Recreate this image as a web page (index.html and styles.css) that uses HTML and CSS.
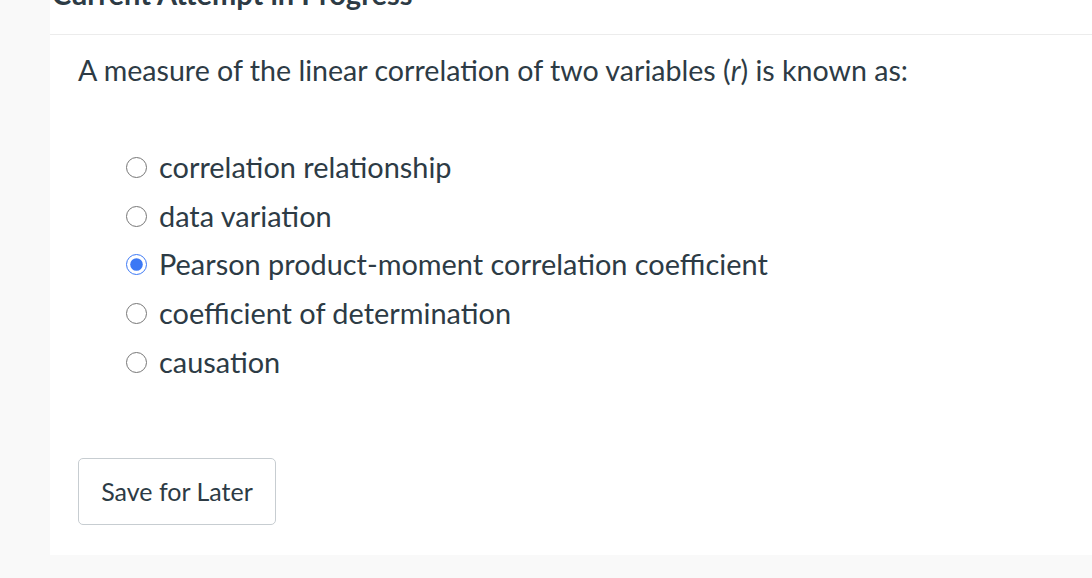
FILE: index.html
```html
<!DOCTYPE html>
<html lang="en">
  <head>
    <meta charset="UTF-8" />
    <title>Quiz</title>
    <link rel="stylesheet" href="styles.css">
  </head>
  <body>
    <div class="page">
      <div class="card">
        <h2 class="card-title">Current Attempt in Progress</h2>
        <div class="question">
          <p class="question-text">A measure of the linear correlation of two variables (<em>r</em>) is known as:</p>
          <ul class="answers">
            <li class="answer">
              <label><input type="radio" name="q1"> correlation relationship</label>
            </li>
            <li class="answer">
              <label><input type="radio" name="q1"> data variation</label>
            </li>
            <li class="answer">
              <label><input type="radio" name="q1" checked> Pearson product-moment correlation coefficient</label>
            </li>
            <li class="answer">
              <label><input type="radio" name="q1"> coefficient of determination</label>
            </li>
            <li class="answer">
              <label><input type="radio" name="q1"> causation</label>
            </li>
          </ul>
          <button class="btn" type="button">Save for Later</button>
        </div>
      </div>
    </div>
  </body>
</html>
```

FILE: styles.css
```css
* {
  box-sizing: border-box;
  margin: 0;
  padding: 0;
}
html,
body {
  height: 100%;
}
body {
  background: #f9f9f9;
  font-family: Lato, "Noto Sans", sans-serif;
  color: #2d3b45;
  overflow: hidden;
}
.page {
  padding-left: 50px;
}
.card {
  background: #fff;
  height: 578px;
}
.card-title {
  font-size: 29px;
  font-weight: 700;
  line-height: 34px;
  margin-top: -23px;
  padding-left: 2px;
  height: 58px;
  border-bottom: 1px solid #ececec;
}
.question {
  padding: 16px 28px 0;
}
.question-text {
  font-size: 28.6px;
  line-height: 38px;
}
.answers {
  list-style: none;
  margin-top: 54px;
  padding-left: 48px;
}
.answer {
  font-size: 28.9px;
  line-height: 48.7px;
}
.answer label {
  display: flex;
  align-items: center;
  gap: 12px;
}
.answer input {
  width: 21px;
  height: 21px;
  margin: 0;
  accent-color: #3b78f5;
}
.btn {
  margin-top: 71px;
  width: 198px;
  height: 67px;
  background: #fff;
  border: 1px solid #c7cdd1;
  border-radius: 5px;
  font-family: inherit;
  font-size: 25px;
  color: #2d3b45;
}
```
